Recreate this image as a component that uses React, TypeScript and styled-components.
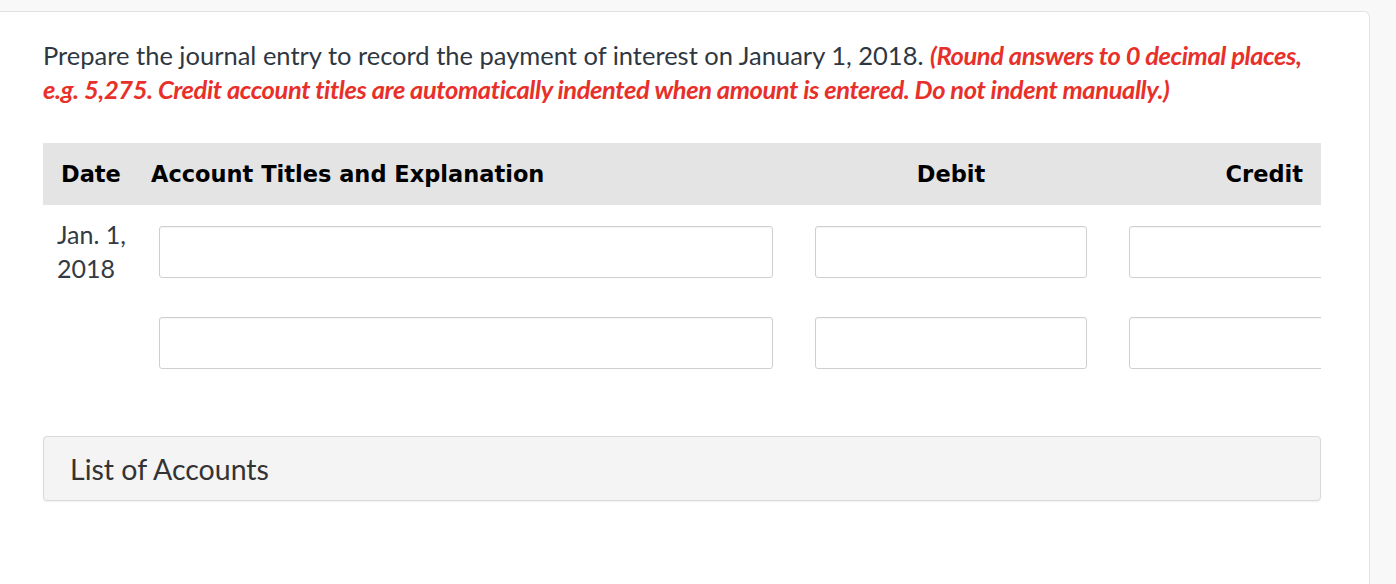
import React from 'react';
import styled, { createGlobalStyle } from 'styled-components';

const GlobalStyle = createGlobalStyle`
  html, body {
    margin: 0;
    padding: 0;
    background: #f8f8f8;
    overflow: hidden;
  }
  * {
    box-sizing: border-box;
  }
`;

const Page = styled.div`
  padding-top: 11px;
  height: 584px;
`;

const Card = styled.div`
  width: 1370px;
  min-height: 600px;
  background: #fff;
  border-top: 1px solid #e2e2e2;
  border-right: 1px solid #e2e2e2;
  border-top-right-radius: 6px;
  padding: 26px 48px 0 43px;
`;

const Prompt = styled.p`
  margin: 0 0 37px;
  font-family: Lato, 'Liberation Sans', sans-serif;
  font-size: 25.5px;
  line-height: 34px;
  color: #2f3742;
`;

const Hint = styled.span`
  color: #e8302a;
  font-weight: 700;
  font-style: italic;
  letter-spacing: -0.4px;
`;

const Table = styled.div`
  width: 1278px;
`;

const HeaderRow = styled.div`
  display: grid;
  grid-template-columns: 108px 664px 272px 1fr;
  align-items: center;
  height: 62px;
  background: #e4e4e4;
  font-family: 'DejaVu Sans', Verdana, sans-serif;
  font-weight: 700;
  font-size: 22.5px;
  color: #000;
`;

const HeadCell = styled.div<{ $align?: 'left' | 'center' | 'right' }>`
  text-align: ${(p) => p.$align ?? 'left'};
  padding: ${(p) => (p.$align === 'right' ? '0 18px 0 0' : p.$align === 'center' ? '0' : '0 0 0 18px')};
`;

const AccountHead = styled.div`
  padding-left: 0;
`;

const BodyRow = styled.div`
  display: grid;
  grid-template-columns: 116px 614px 314px 234px;
  align-items: start;
  padding: 21px 0 18px;
`;

const DateCell = styled.div`
  height: 52px;
  padding: 0 10px 0 14px;
  margin-top: -9px;
  font-family: Lato, 'Liberation Sans', sans-serif;
  font-size: 25px;
  line-height: 34px;
  color: #333a44;
`;

const AmountCell = styled.div`
  padding-left: 42px;
  overflow: hidden;
`;

const Field = styled.input<{ $width?: number }>`
  display: block;
  width: ${(p) => (p.$width ? `${p.$width}px` : '100%')};
  height: 52px;
  border: 1px solid #cfcfcf;
  border-radius: 3px;
  background: #fff;
  box-shadow: inset 0 1px 1px rgba(0, 0, 0, 0.04);
  outline: none;
  font-family: Lato, 'Liberation Sans', sans-serif;
  font-size: 20px;
  padding: 0 10px;
`;

const AccountsPanel = styled.div`
  margin-top: 49px;
  width: 1278px;
  height: 65px;
  display: flex;
  align-items: center;
  padding-left: 26px;
  background: #f4f4f4;
  border: 1px solid #dadada;
  border-radius: 4px;
  box-shadow: 0 1px 2px rgba(0, 0, 0, 0.06);
  font-family: Lato, 'Liberation Sans', sans-serif;
  font-size: 28.5px;
  color: #333;
`;

const rows = [{ date: 'Jan. 1, 2018' }, { date: '' }];

export default function App() {
  return (
    <>
      <GlobalStyle />
      <Page>
        <Card>
          <Prompt>
            Prepare the journal entry to record the payment of interest on January 1, 2018.{' '}
            <Hint>
              (Round answers to 0 decimal places, e.g. 5,275. Credit account titles are
              automatically indented when amount is entered. Do not indent manually.)
            </Hint>
          </Prompt>

          <Table>
            <HeaderRow>
              <HeadCell>Date</HeadCell>
              <AccountHead>Account Titles and Explanation</AccountHead>
              <HeadCell $align="center">Debit</HeadCell>
              <HeadCell $align="right">Credit</HeadCell>
            </HeaderRow>

            {rows.map((row, i) => (
              <BodyRow key={i}>
                <DateCell>{row.date}</DateCell>
                <Field type="text" />
                <AmountCell>
                  <Field type="text" />
                </AmountCell>
                <AmountCell>
                  <Field type="text" $width={272} />
                </AmountCell>
              </BodyRow>
            ))}
          </Table>

          <AccountsPanel>List of Accounts</AccountsPanel>
        </Card>
      </Page>
    </>
  );
}
